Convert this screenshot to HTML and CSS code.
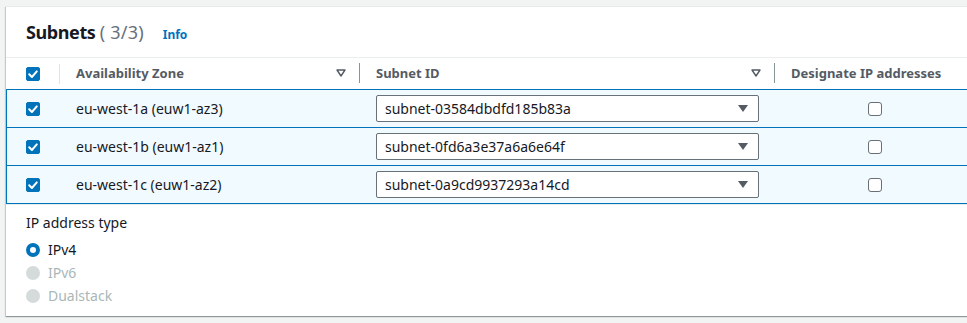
FILE: index.html
```html
<!DOCTYPE html>
<html lang="en">
<head>
<meta charset="utf-8">
<title>Subnets</title>
<link rel="stylesheet" href="styles.css">
</head>
<body>
<div class="card">
  <div class="card-header">
    <h2 class="title">Subnets <span class="count">( 3/3)</span></h2>
    <a class="info" href="#">Info</a>
  </div>
  <div class="table">
    <div class="grid thead">
      <div class="cell cell-check">
        <span class="cb checked"><svg viewBox="0 0 14 14" width="14" height="14"><path d="M3.2 7.3 L5.9 10 L10.8 4.4" fill="none" stroke="#fff" stroke-width="2" stroke-linecap="round" stroke-linejoin="round"/></svg></span>
        <span class="sep sep-light"></span>
      </div>
      <div class="cell th">
        <span class="th-label">Availability Zone</span>
        <svg class="sort" viewBox="0 0 10 8" width="10" height="8"><path d="M1 1 H9 L5 7 Z" fill="none" stroke="#545b64" stroke-width="1.4" stroke-linejoin="round"/></svg>
        <span class="sep"></span>
      </div>
      <div class="cell th">
        <span class="th-label">Subnet ID</span>
        <svg class="sort" viewBox="0 0 10 8" width="10" height="8"><path d="M1 1 H9 L5 7 Z" fill="none" stroke="#545b64" stroke-width="1.4" stroke-linejoin="round"/></svg>
        <span class="sep"></span>
      </div>
      <div class="cell th">
        <span class="th-label">Designate IP addresses</span>
      </div>
    </div>

    <div class="grid trow selected">
      <div class="cell cell-check"><span class="cb checked"><svg viewBox="0 0 14 14" width="14" height="14"><path d="M3.2 7.3 L5.9 10 L10.8 4.4" fill="none" stroke="#fff" stroke-width="2" stroke-linecap="round" stroke-linejoin="round"/></svg></span></div>
      <div class="cell td">eu-west-1a (euw1-az3)</div>
      <div class="cell td"><div class="select"><span>subnet-03584dbdfd185b83a</span><svg viewBox="0 0 10 7" width="10" height="7"><path d="M0 0 H10 L5 7 Z" fill="#545b64"/></svg></div></div>
      <div class="cell td cell-center"><span class="cb"></span></div>
    </div>

    <div class="grid trow selected">
      <div class="cell cell-check"><span class="cb checked"><svg viewBox="0 0 14 14" width="14" height="14"><path d="M3.2 7.3 L5.9 10 L10.8 4.4" fill="none" stroke="#fff" stroke-width="2" stroke-linecap="round" stroke-linejoin="round"/></svg></span></div>
      <div class="cell td">eu-west-1b (euw1-az1)</div>
      <div class="cell td"><div class="select"><span>subnet-0fd6a3e37a6a6e64f</span><svg viewBox="0 0 10 7" width="10" height="7"><path d="M0 0 H10 L5 7 Z" fill="#545b64"/></svg></div></div>
      <div class="cell td cell-center"><span class="cb"></span></div>
    </div>

    <div class="grid trow selected last">
      <div class="cell cell-check"><span class="cb checked"><svg viewBox="0 0 14 14" width="14" height="14"><path d="M3.2 7.3 L5.9 10 L10.8 4.4" fill="none" stroke="#fff" stroke-width="2" stroke-linecap="round" stroke-linejoin="round"/></svg></span></div>
      <div class="cell td">eu-west-1c (euw1-az2)</div>
      <div class="cell td"><div class="select"><span>subnet-0a9cd9937293a14cd</span><svg viewBox="0 0 10 7" width="10" height="7"><path d="M0 0 H10 L5 7 Z" fill="#545b64"/></svg></div></div>
      <div class="cell td cell-center"><span class="cb"></span></div>
    </div>
  </div>

  <div class="ip-type">
    <div class="ip-label">IP address type</div>
    <div class="radios">
      <label class="radio"><span class="dot on"></span><span>IPv4</span></label>
      <label class="radio disabled"><span class="dot"></span><span>IPv6</span></label>
      <label class="radio disabled"><span class="dot"></span><span>Dualstack</span></label>
    </div>
  </div>
</div>
</body>
</html>
```

FILE: styles.css
```css
html, body {
  margin: 0;
  padding: 0;
}
body {
  background: #f2f3f3;
  font-family: "Noto Sans", "Open Sans", Arial, sans-serif;
  font-size: 14px;
  color: #16191f;
  overflow: hidden;
  width: 967px;
  height: 323px;
}
.card {
  margin: 6px 0 0 6px;
  width: 969px;
  height: 310px;
  box-sizing: border-box;
  background: #fff;
  border-top: 1px solid #e9ebeb;
  box-shadow: 0 1px 1px 0 rgba(0, 28, 36, 0.3), -1px 1px 1px 0 rgba(0, 28, 36, 0.15);
}
.card-header {
  display: flex;
  align-items: baseline;
  padding: 14px 20px 14px 20px;
  border-bottom: 1px solid #eaeded;
  height: 22px;
}
.title {
  margin: 0;
  font-size: 18px;
  line-height: 22px;
  font-weight: 700;
  letter-spacing: -0.4px;
  color: #16191f;
}
.count {
  font-weight: 400;
  color: #687078;
  letter-spacing: 0.2px;
}
.info {
  margin-left: 19px;
  font-size: 12px;
  font-weight: 700;
  color: #0073bb;
  text-decoration: none;
}
.grid {
  display: grid;
  grid-template-columns: 54px 300px 415px 200px;
}
.thead {
  height: 31px;
}
.cell {
  display: flex;
  align-items: center;
  box-sizing: border-box;
}
.cell-check {
  padding-left: 20px;
}
.thead .cell-check {
  justify-content: space-between;
}
.th {
  padding-left: 16px;
  padding-bottom: 1px;
  font-size: 13px;
  font-weight: 700;
  color: #545b64;
}
.th-label {
  flex: 1;
}
.sort {
  margin-right: 13px;
}
.sep {
  width: 1px;
  height: 20px;
  background: #879596;
}
.sep-light {
  background: #dfe3e3;
}
.cb {
  width: 14px;
  height: 14px;
  box-sizing: border-box;
  border: 1px solid #687078;
  border-radius: 3px;
  background: #fff;
  display: inline-flex;
}
.cb.checked {
  background: #0073bb;
  border-color: #0073bb;
  border-radius: 2px;
}
.cb.checked svg {
  margin: -1px;
}
.trow {
  height: 38px;
  border-top: 1px solid #0073bb;
  background: #f1faff;
  box-sizing: border-box;
  box-shadow: inset 1px 0 0 #0073bb;
}
.trow.last {
  height: 39px;
  border-bottom: 1px solid #0073bb;
}
.td {
  padding: 0 16px;
}
.cell-center {
  justify-content: center;
  padding: 0;
}
.select {
  flex: 1;
  height: 27px;
  box-sizing: border-box;
  border: 1px solid #687078;
  border-radius: 2px;
  background: #fff;
  display: flex;
  align-items: center;
  justify-content: space-between;
  padding: 0 10px 0 8px;
  color: #16191f;
}
.ip-type {
  padding: 7px 20px 6px 20px;
  border-top: 1px solid #eaeded;
}
.ip-label {
  line-height: 22px;
}
.radios {
  margin-top: 4px;
  display: flex;
  flex-direction: column;
}
.radio {
  display: flex;
  align-items: center;
  height: 23px;
  gap: 8px;
}
.dot {
  width: 14px;
  height: 14px;
  border-radius: 50%;
  box-sizing: border-box;
  background: #d5dbdb;
}
.dot.on {
  background: #fff;
  border: 4px solid #0073bb;
}
.radio.disabled {
  color: #aab7b8;
}
```
